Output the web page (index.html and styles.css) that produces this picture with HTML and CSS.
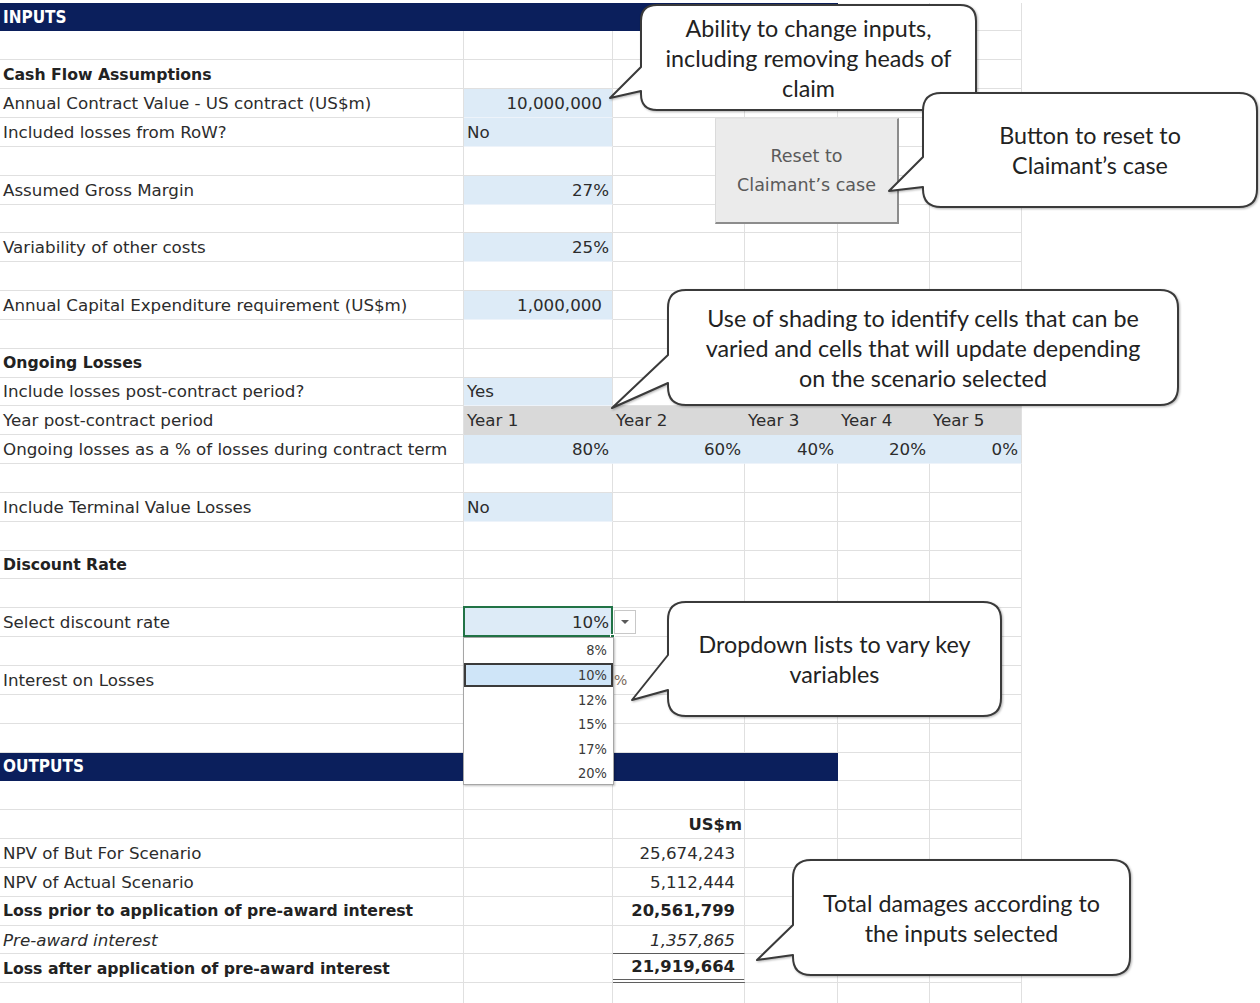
FILE: index.html
```html
<!DOCTYPE html>
<html lang="en">
<head>
<meta charset="utf-8">
<title>Damages model – inputs and outputs</title>
<link rel="stylesheet" href="styles.css">
</head>
<body>
<div class="page">
  <div class="sheet">
    <div class="r"><div class="band">INPUTS</div><div></div><div></div></div>
    <div class="r"><div></div><div></div><div></div><div></div><div></div><div></div></div>
    <div class="r"><div class="b">Cash Flow Assumptions</div><div></div><div></div><div></div><div></div><div></div></div>
    <div class="r"><div>Annual Contract Value - US contract (US$m)</div><div class="in rt n">10,000,000</div><div></div><div></div><div></div><div></div></div>
    <div class="r"><div>Included losses from RoW?</div><div class="in">No</div><div></div><div></div><div></div><div></div></div>
    <div class="r"><div></div><div></div><div></div><div></div><div></div><div></div></div>
    <div class="r"><div>Assumed Gross Margin</div><div class="in rt">27%</div><div></div><div></div><div></div><div></div></div>
    <div class="r"><div></div><div></div><div></div><div></div><div></div><div></div></div>
    <div class="r"><div>Variability of other costs</div><div class="in rt">25%</div><div></div><div></div><div></div><div></div></div>
    <div class="r"><div></div><div></div><div></div><div></div><div></div><div></div></div>
    <div class="r"><div>Annual Capital Expenditure requirement (US$m)</div><div class="in rt n">1,000,000</div><div></div><div></div><div></div><div></div></div>
    <div class="r"><div></div><div></div><div></div><div></div><div></div><div></div></div>
    <div class="r"><div class="b">Ongoing Losses</div><div></div><div></div><div></div><div></div><div></div></div>
    <div class="r"><div>Include losses post-contract period?</div><div class="in">Yes</div><div></div><div></div><div></div><div></div></div>
    <div class="r"><div>Year post-contract period</div><div class="calc join">Year 1</div><div class="calc join">Year 2</div><div class="calc join">Year 3</div><div class="calc join">Year 4</div><div class="calc join">Year 5</div></div>
    <div class="r"><div>Ongoing losses as a % of losses during contract term</div><div class="in join rt">80%</div><div class="in join rt">60%</div><div class="in join rt">40%</div><div class="in join rt">20%</div><div class="in join rt">0%</div></div>
    <div class="r"><div></div><div></div><div></div><div></div><div></div><div></div></div>
    <div class="r"><div>Include Terminal Value Losses</div><div class="in">No</div><div></div><div></div><div></div><div></div></div>
    <div class="r"><div></div><div></div><div></div><div></div><div></div><div></div></div>
    <div class="r"><div class="b">Discount Rate</div><div></div><div></div><div></div><div></div><div></div></div>
    <div class="r"><div></div><div></div><div></div><div></div><div></div><div></div></div>
    <div class="r">
      <div>Select discount rate</div>
      <div class="in rt sel">10%
        <span class="handle"></span>
        <span class="dd-btn"><span class="caret"></span></span>
        <ul class="dd-list">
          <li>8%</li>
          <li class="hl">10%</li>
          <li>12%</li>
          <li>15%</li>
          <li>17%</li>
          <li>20%</li>
        </ul>
      </div>
      <div></div><div></div><div></div><div></div>
    </div>
    <div class="r"><div></div><div></div><div></div><div></div><div></div><div></div></div>
    <div class="r"><div>Interest on Losses</div><div></div><div class="spill">%</div><div></div><div></div><div></div></div>
    <div class="r"><div></div><div></div><div></div><div></div><div></div><div></div></div>
    <div class="r"><div></div><div></div><div></div><div></div><div></div><div></div></div>
    <div class="r"><div class="band">OUTPUTS</div><div></div><div></div></div>
    <div class="r"><div></div><div></div><div></div><div></div><div></div><div></div></div>
    <div class="r"><div></div><div></div><div class="rt b num unit">US$m</div><div></div><div></div><div></div></div>
    <div class="r"><div>NPV of But For Scenario</div><div></div><div class="rt out">25,674,243</div><div></div><div></div><div></div></div>
    <div class="r"><div>NPV of Actual Scenario</div><div></div><div class="rt out">5,112,444</div><div></div><div></div><div></div></div>
    <div class="r"><div class="b">Loss prior to application of pre-award interest</div><div></div><div class="rt out b num">20,561,799</div><div></div><div></div><div></div></div>
    <div class="r"><div class="i">Pre-award interest</div><div></div><div class="rt out i sub">1,357,865</div><div></div><div></div><div></div></div>
    <div class="r"><div class="b">Loss after application of pre-award interest</div><div></div><div class="rt out b num total">21,919,664</div><div></div><div></div><div></div></div>
    <div class="r"><div></div><div></div><div></div><div></div><div></div><div></div></div>
  </div>

  <div class="reset-btn">Reset to<br>Claimant’s case</div>

  <div class="callout co1">
    <svg width="335" height="105"><path d="M16,0 H319 Q335,0 335,16 V89 Q335,105 319,105 H16 Q0,105 0,89 V86 L-31,93 L0,62 V16 Q0,0 16,0 Z"/></svg>
    <p>Ability to change inputs,<br>including removing heads of<br>claim</p>
  </div>

  <div class="callout co2">
    <svg width="334" height="114"><path d="M18,0 H316 Q334,0 334,18 V96 Q334,114 316,114 H18 Q0,114 0,96 V94 L-34,98 L0,64 V18 Q0,0 18,0 Z"/></svg>
    <p>Button to reset to<br>Claimant’s case</p>
  </div>

  <div class="callout co3">
    <svg width="510" height="115"><path d="M18,0 H492 Q510,0 510,18 V97 Q510,115 492,115 H18 Q0,115 0,97 V93 L-56,118 L0,65 V18 Q0,0 18,0 Z"/></svg>
    <p>Use of shading to identify cells that can be<br>varied and cells that will update depending<br>on the scenario selected</p>
  </div>

  <div class="callout co4">
    <svg width="333" height="114"><path d="M18,0 H315 Q333,0 333,18 V96 Q333,114 315,114 H18 Q0,114 0,96 V88 L-36,98 L0,53 V18 Q0,0 18,0 Z"/></svg>
    <p>Dropdown lists to vary key<br>variables</p>
  </div>

  <div class="callout co5">
    <svg width="337" height="115"><path d="M18,0 H319 Q337,0 337,18 V97 Q337,115 319,115 H18 Q0,115 0,97 V95 L-36,100 L0,65 V18 Q0,0 18,0 Z"/></svg>
    <p>Total damages according to<br>the inputs selected</p>
  </div>
</div>
</body>
</html>
```

FILE: styles.css
```css
* { box-sizing: border-box; }

html, body {
  margin: 0;
  padding: 0;
  background: #fff;
}

.page {
  position: relative;
  width: 1260px;
  height: 1003px;
  overflow: hidden;
  padding-top: 2.6px;
  font-family: "DejaVu Sans", sans-serif;
  font-size: 16.7px;
  color: #2c2c2c;
}

/* ---- worksheet grid ---- */
.sheet {
  display: flex;
  flex-direction: column;
  width: 1022px;
}

.r {
  display: grid;
  grid-template-columns: 464px 149px 132px 93px 92px 92px;
  height: 28.85px;
  flex: none;
}

.r > div {
  display: flex;
  align-items: center;
  min-width: 0;
  padding: 0 3px;
  white-space: nowrap;
  border-right: 1px solid #e0e0e0;
  border-bottom: 1px solid #e0e0e0;
}

.b { font-weight: bold; font-size: 15.7px; color: #222; }
.b.num { font-size: 16.4px; }
.i { font-style: italic; }
.rt { justify-content: flex-end; }
.n { padding-right: 10px !important; }
.out { padding-right: 9px !important; }
.unit { padding-right: 2px !important; }

.r > .band {
  grid-column: span 4;
  background: #0b1f5c;
  color: #fff;
  font-family: "DejaVu Sans Condensed", "DejaVu Sans", sans-serif;
  font-size: 17px;
  font-weight: bold;
  border-color: #0b1f5c;
  padding-left: 3px;
}

/* input cells and calculated cells */
.r > .in {
  background: #ddebf7;
  border-bottom-color: #edf3fa;
}
.r > .calc {
  background: #d9d9d9;
  border-bottom-color: #d9d9d9;
}
.r > .join { border-right-color: transparent; }
.r > .join:last-child { border-right-color: #e0e0e0; }

.r > .sub { border-bottom: 1px solid #5a5a5a; }
.r > .total { border-bottom: 4px double #5f5f5f; }

.r > .spill {
  padding-left: 1px;
  font-size: 14px;
  color: #7a6a5c;
}

/* ---- data validation dropdown ---- */
.r > .sel {
  position: relative;
  overflow: visible;
}
.sel::before {
  content: "";
  position: absolute;
  left: -1px;
  top: -2px;
  right: -1px;
  bottom: -1px;
  border: 2px solid #217346;
  pointer-events: none;
}
.handle {
  position: absolute;
  right: -3px;
  bottom: -3px;
  width: 5px;
  height: 5px;
  background: #217346;
  border: 1px solid #fff;
}
.dd-btn {
  position: absolute;
  left: calc(100% + 2px);
  top: 2px;
  width: 22px;
  height: 24px;
  background: #fff;
  border: 1px solid #c8c8c8;
  display: flex;
  align-items: center;
  justify-content: center;
}
.caret {
  width: 0;
  height: 0;
  border-left: 4px solid transparent;
  border-right: 4px solid transparent;
  border-top: 4px solid #5a5a5a;
}
.dd-list {
  position: absolute;
  z-index: 5;
  left: -1px;
  top: calc(100% + 1px);
  width: 151px;
  height: 148px;
  margin: 0;
  padding: 0;
  list-style: none;
  background: #fff;
  border: 1px solid #a6a6a6;
  box-shadow: 1px 1px 2px rgba(0, 0, 0, 0.25);
}
.dd-list li {
  height: 24.6px;
  display: flex;
  align-items: center;
  justify-content: flex-end;
  padding-right: 6px;
  font-family: "DejaVu Sans Condensed", "DejaVu Sans", sans-serif;
  font-size: 14.5px;
  color: #3a3a3a;
}
.dd-list li.hl {
  background: #cfe5f8;
  border: 2px solid #3b3b3b;
  padding-right: 4px;
}

/* ---- form button ---- */
.reset-btn {
  position: absolute;
  left: 715px;
  top: 118px;
  width: 184px;
  height: 106px;
  background: #ebebeb;
  border-left: 1px solid #dadada;
  border-top: 1px solid #e4e4e4;
  border-right: 2px solid #8c8c8c;
  border-bottom: 2px solid #8c8c8c;
  display: flex;
  align-items: center;
  justify-content: center;
  text-align: center;
  line-height: 29px;
  color: #5a5a5a;
  font-family: "DejaVu Sans", sans-serif;
  font-size: 17.5px;
}

/* ---- callouts ---- */
.callout {
  position: absolute;
  z-index: 10;
}
.callout svg {
  position: absolute;
  left: 0;
  top: 0;
  overflow: visible;
  filter: drop-shadow(1px 1px 1px rgba(0, 0, 0, 0.3));
}
.callout path {
  fill: #fff;
  stroke: #3a3a3a;
  stroke-width: 2;
  stroke-linejoin: round;
}
.callout p {
  position: absolute;
  inset: 0;
  margin: 0;
  display: flex;
  align-items: center;
  justify-content: center;
  text-align: center;
  font-family: Lato, "Open Sans", sans-serif;
  font-size: 23.3px;
  line-height: 30px;
  color: #222;
}

.co1 { left: 641px; top: 5px;   width: 335px; height: 105px; }
.co2 { left: 923px; top: 93px;  width: 334px; height: 114px; }
.co3 { left: 668px; top: 290px; width: 510px; height: 115px; }
.co4 { left: 668px; top: 602px; width: 333px; height: 114px; }
.co5 { left: 793px; top: 860px; width: 337px; height: 115px; }
```
